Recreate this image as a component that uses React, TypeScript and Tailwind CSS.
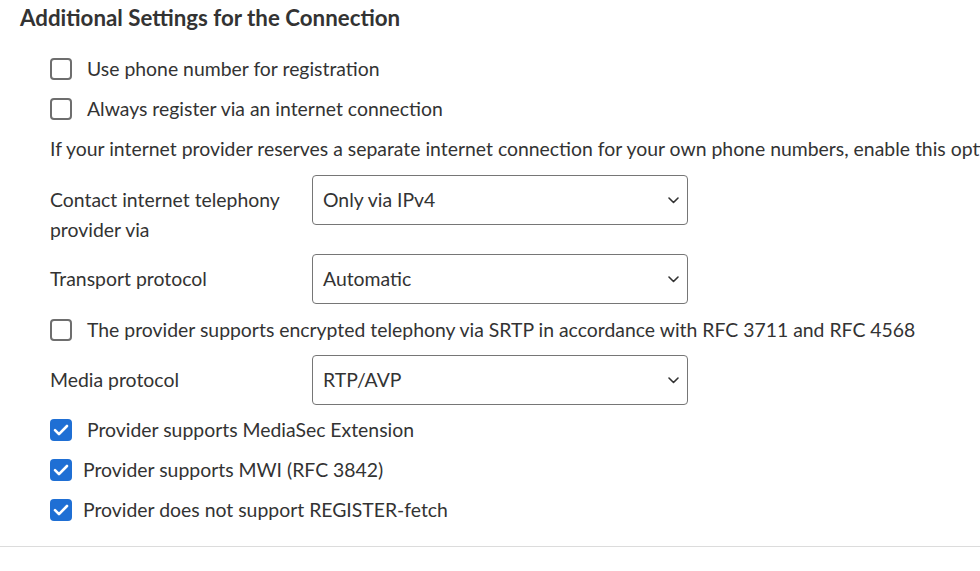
import React from 'react';

const font = "font-['Lato','Liberation_Sans',sans-serif]";

// Checkbox drawn to look like the native control
const Box: React.FC<{ checked?: boolean }> = ({ checked }) =>
  checked ? (
    <span className="flex h-[22px] w-[22px] shrink-0 items-center justify-center rounded-[4px] bg-[#1f6fd4]">
      <svg width="22" height="22" viewBox="0 0 22 22" fill="none">
        <path d="M5 11.2l4 4L17 7" stroke="white" strokeWidth="2.6" strokeLinecap="round" strokeLinejoin="round" />
      </svg>
    </span>
  ) : (
    <span className="h-[22px] w-[22px] shrink-0 rounded-[4px] border-2 border-[#6e6e6e] bg-white" />
  );

const CheckRow: React.FC<{ label: string; checked?: boolean; gap?: string; className?: string }> = ({
  label,
  checked,
  gap = 'gap-[15px]',
  className = '',
}) => (
  <label className={`flex h-[40px] items-center ${gap} ${className}`}>
    <Box checked={checked} />
    <span className="whitespace-nowrap">{label}</span>
  </label>
);

const Select: React.FC<{ value: string }> = ({ value }) => (
  <div className="flex h-[50px] w-[376px] shrink-0 items-center justify-between rounded-[4px] border border-[#767676] bg-white pl-[10px] pr-[8px]">
    <span>{value}</span>
    <svg width="11" height="7" viewBox="0 0 11 7" fill="none">
      <path d="M1 1l4.5 4.5L10 1" stroke="#333" strokeWidth="1.6" strokeLinecap="round" strokeLinejoin="round" />
    </svg>
  </div>
);

const SelectRow: React.FC<{ label: React.ReactNode; value: string; className?: string }> = ({
  label,
  value,
  className = '',
}) => (
  <div className={`flex items-start ${className}`}>
    <div className="w-[262px] shrink-0 pt-[10px] leading-[30px]">{label}</div>
    <Select value={value} />
  </div>
);

const App: React.FC = () => {
  return (
    <div className={`h-[571px] w-[980px] overflow-hidden bg-white text-[19.4px] text-[#333] ${font}`}>
      <h2 className="pl-[20px] pt-[4px] text-[22.3px] font-bold leading-[28px]">
        Additional Settings for the Connection
      </h2>

      <div className="pl-[50px] pt-[17px]">
        <CheckRow label="Use phone number for registration" />
        <CheckRow label="Always register via an internet connection" />
        <p className="flex h-[40px] items-center whitespace-nowrap">
          If your internet provider reserves a separate internet connection for your own phone numbers, enable this option.
        </p>

        <SelectRow
          className="mt-[6px]"
          label={
            <>
              Contact internet telephony
              <br />
              provider via
            </>
          }
          value="Only via IPv4"
        />
        <SelectRow className="mt-[9px]" label="Transport protocol" value="Automatic" />

        <CheckRow
          className="mt-[6px]"
          label="The provider supports encrypted telephony via SRTP in accordance with RFC 3711 and RFC 4568"
        />

        <SelectRow className="mt-[5px]" label="Media protocol" value="RTP/AVP" />

        <div className="mt-[5px]">
          <CheckRow checked label="Provider supports MediaSec Extension" />
          <CheckRow checked gap="gap-[11px]" label="Provider supports MWI (RFC 3842)" />
          <CheckRow checked gap="gap-[11px]" label="Provider does not support REGISTER-fetch" />
        </div>
      </div>

      <div className="mt-[16px] border-t border-[#dcdcdc]" />
    </div>
  );
};

export default App;
